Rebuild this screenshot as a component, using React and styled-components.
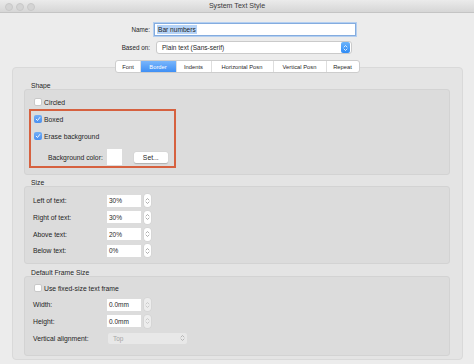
import React from "react";
import styled, { createGlobalStyle } from "styled-components";

const GlobalStyle = createGlobalStyle`
  html, body {
    margin: 0;
    padding: 0;
    background: #ececec;
  }
  body {
    font-family: "Liberation Sans", Arial, sans-serif;
    color: #1f1f1f;
  }
`;

const Window = styled.div`
  width: 474px;
  height: 364px;
  overflow: hidden;
  background: #ececec;
  display: flex;
  flex-direction: column;
`;

const TitleBar = styled.div`
  height: 12px;
  flex: none;
  display: flex;
  align-items: center;
  justify-content: center;
  background: linear-gradient(#ebebeb, #d6d6d6);
  border-bottom: 1px solid #c4c4c4;
  font-size: 7.1px;
  color: #3a3a3a;
  position: relative;
`;

const Lights = styled.div`
  position: absolute;
  left: 5px;
  top: 3px;
  display: flex;
  gap: 3px;

  span {
    width: 6px;
    height: 6px;
    border-radius: 50%;
    background: #d4d4d4;
    border: 0.5px solid #c8c8c8;
  }
`;

const TopForm = styled.div`
  display: grid;
  grid-template-columns: 150px auto;
  column-gap: 4px;
  row-gap: 5px;
  align-items: center;
  padding-top: 10px;
`;

const TopLabel = styled.div`
  text-align: right;
  font-size: 6.3px;
`;

const NameInput = styled.div`
  width: 198px;
  height: 11px;
  background: #fff;
  border: 1px solid #84acdf;
  box-shadow: 0 0 0 1px #b4cff0;
  display: flex;
  align-items: center;
  padding-left: 2px;
  font-size: 6.6px;

  span {
    background: #b5d3f7;
    padding: 0 1px;
    line-height: 9px;
  }
`;

const Popup = styled.div`
  width: ${(p) => p.$w}px;
  height: 13px;
  margin-left: 2px;
  background: ${(p) => (p.$disabled ? "#e8e8e8" : "#fff")};
  border: 1px solid ${(p) => (p.$disabled ? "#dcdcdc" : "#cacaca")};
  border-radius: 3px;
  box-sizing: border-box;
  display: flex;
  align-items: center;
  justify-content: space-between;
  padding-left: 5px;
  padding-right: ${(p) => (p.$disabled ? 2 : 0)}px;
  font-size: 6.5px;
  color: ${(p) => (p.$disabled ? "#a6a6a6" : "#1f1f1f")};
`;

const PopupArrow = styled.div`
  width: 9px;
  height: 11px;
  margin-right: 1px;
  border-radius: 2px;
  background: linear-gradient(#6cb4fb, #2f8bf5);
  display: flex;
  align-items: center;
  justify-content: center;
`;

const Tabs = styled.div`
  display: flex;
  align-self: center;
  margin-top: 6px;
  margin-bottom: -6px;
  height: 11px;
  background: #fff;
  border: 1px solid #cdcdcd;
  border-radius: 3px;
  position: relative;
  z-index: 1;
  overflow: hidden;
`;

const Tab = styled.div`
  width: ${(p) => p.$w}px;
  display: flex;
  align-items: center;
  justify-content: center;
  font-size: 5.8px;
  color: ${(p) => (p.$active ? "#fff" : "#1f1f1f")};
  background: ${(p) =>
    p.$active ? "linear-gradient(#79b6fb, #3f8ff5)" : "transparent"};
  border-left: 1px solid ${(p) => (p.$first ? "transparent" : "#dedede")};
  box-sizing: border-box;
`;

const Panel = styled.div`
  margin: 0 11px 0 12px;
  height: 293px;
  box-sizing: border-box;
  background: #e4e4e4;
  border: 1px solid #d9d9d9;
  border-radius: 4px;
  padding: 15px 12px 4px 11px;
  display: flex;
  flex-direction: column;
`;

const Section = styled.div`
  display: flex;
  flex-direction: column;
  margin-top: ${(p) => p.$mt || 0}px;
`;

const SectionTitle = styled.div`
  font-size: 6.8px;
  line-height: 6px;
  height: 6px;
  padding-left: 7px;
`;

const GroupBox = styled.div`
  height: ${(p) => p.$h}px;
  box-sizing: border-box;
  background: #dcdcdc;
  border: 1px solid #d3d3d3;
  border-radius: 3px;
  padding: ${(p) => p.$pad};
  display: flex;
  flex-direction: column;
`;

const CheckRow = styled.label`
  display: flex;
  align-items: center;
  gap: 2px;
  height: 8px;
  font-size: 6.8px;
  margin-top: ${(p) => p.$mt || 0}px;
  margin-left: ${(p) => p.$ml || 0}px;
`;

const Box = styled.span`
  width: 8px;
  height: 8px;
  box-sizing: border-box;
  border-radius: 2px;
  background: ${(p) => (p.$checked ? "linear-gradient(#72aef5, #4a8ff0)" : "#fff")};
  border: ${(p) => (p.$checked ? "none" : "0.5px solid #c9c9c9")};
  display: flex;
  align-items: center;
  justify-content: center;
`;

const Highlight = styled.div`
  width: 147px;
  height: 59px;
  box-sizing: border-box;
  margin: 3px 0 0 -5px;
  border: 2px solid #d6613f;
  padding: 4px 0 0 3px;
  display: flex;
  flex-direction: column;
`;

const ColorRow = styled.div`
  display: flex;
  align-items: center;
  margin-top: 9px;
  padding-left: 14px;
  font-size: 6.8px;
`;

const Swatch = styled.div`
  width: 15px;
  height: 16px;
  margin-left: 4px;
  background: #fff;
`;

const Button = styled.div`
  width: 34px;
  height: 11px;
  margin-left: 12px;
  background: #fff;
  border-radius: 2px;
  box-shadow: 0 0.5px 1px rgba(0, 0, 0, 0.2);
  display: flex;
  align-items: center;
  justify-content: center;
  font-size: 6.8px;
`;

const FieldGrid = styled.div`
  display: grid;
  grid-template-columns: 71px 34px 7px;
  column-gap: 3px;
  row-gap: 3.8px;
  align-items: center;
  margin-top: ${(p) => p.$mt || 0}px;
`;

const FieldLabel = styled.div`
  font-size: 6.8px;
`;

const Field = styled.div`
  height: 12px;
  background: #fff;
  display: flex;
  align-items: center;
  padding-left: 2px;
  font-size: 6.5px;
`;

const Stepper = styled.div`
  width: 7px;
  height: 13px;
  border-radius: 3px;
  background: ${(p) => (p.$disabled ? "#ededed" : "#fff")};
  box-shadow: 0 0 0 0.5px #cfcfcf;
  display: flex;
  align-items: center;
  justify-content: center;
`;

const VAlignPopup = styled(Popup)`
  margin-left: 0;
  grid-column: 2 / 4;
`;

const Chevrons = ({ color = "#fff", w = 5, h = 8 }) => (
  <svg width={w} height={h} viewBox="0 0 5 8">
    <path
      d="M1 3 L2.5 1.5 L4 3 M1 5 L2.5 6.5 L4 5"
      fill="none"
      stroke={color}
      strokeWidth="0.8"
      strokeLinecap="round"
      strokeLinejoin="round"
    />
  </svg>
);

const Check = () => (
  <svg width="6" height="6" viewBox="0 0 6 6">
    <path
      d="M1.2 3.2 L2.5 4.5 L4.8 1.5"
      fill="none"
      stroke="#fff"
      strokeWidth="0.9"
      strokeLinecap="round"
      strokeLinejoin="round"
    />
  </svg>
);

const tabs = [
  ["Font", 24],
  ["Border", 36],
  ["Indents", 35],
  ["Horizontal Posn", 62],
  ["Vertical Posn", 53],
  ["Repeat", 33],
];

const sizeRows = [
  ["Left of text:", "30%"],
  ["Right of text:", "30%"],
  ["Above text:", "20%"],
  ["Below text:", "0%"],
];

export default function App() {
  return (
    <Window>
      <GlobalStyle />
      <TitleBar>
        <Lights>
          <span />
          <span />
          <span />
        </Lights>
        System Text Style
      </TitleBar>

      <TopForm>
        <TopLabel>Name:</TopLabel>
        <NameInput>
          <span>Bar numbers</span>
        </NameInput>
        <TopLabel>Based on:</TopLabel>
        <Popup $w={196}>
          Plain text (Sans-serif)
          <PopupArrow>
            <Chevrons />
          </PopupArrow>
        </Popup>
      </TopForm>

      <Tabs>
        {tabs.map(([name, w], i) => (
          <Tab key={name} $w={w} $first={i === 0} $active={name === "Border"}>
            {name}
          </Tab>
        ))}
      </Tabs>

      <Panel>
        <Section>
          <SectionTitle>Shape</SectionTitle>
          <GroupBox $h={86} $pad="8px 0 0 9px">
            <CheckRow>
              <Box />
              Circled
            </CheckRow>
            <Highlight>
              <CheckRow>
                <Box $checked>
                  <Check />
                </Box>
                Boxed
              </CheckRow>
              <CheckRow $mt={9}>
                <Box $checked>
                  <Check />
                </Box>
                Erase background
              </CheckRow>
              <ColorRow>
                Background color:
                <Swatch />
                <Button>Set...</Button>
              </ColorRow>
            </Highlight>
          </GroupBox>
        </Section>

        <Section $mt={5}>
          <SectionTitle>Size</SectionTitle>
          <GroupBox $h={78} $pad="7px 0 0 8px">
            <FieldGrid>
              {sizeRows.map(([label, value]) => (
                <React.Fragment key={label}>
                  <FieldLabel>{label}</FieldLabel>
                  <Field>{value}</Field>
                  <Stepper>
                    <Chevrons color="#9a9a9a" />
                  </Stepper>
                </React.Fragment>
              ))}
            </FieldGrid>
          </GroupBox>
        </Section>

        <Section $mt={6}>
          <SectionTitle>Default Frame Size</SectionTitle>
          <GroupBox $h={80} $pad="7px 0 0 8px">
            <CheckRow $ml={1}>
              <Box />
              Use fixed-size text frame
            </CheckRow>
            <FieldGrid $mt={6}>
              <FieldLabel>Width:</FieldLabel>
              <Field>0.0mm</Field>
              <Stepper $disabled>
                <Chevrons color="#c2c2c2" />
              </Stepper>
              <FieldLabel>Height:</FieldLabel>
              <Field>0.0mm</Field>
              <Stepper $disabled>
                <Chevrons color="#c2c2c2" />
              </Stepper>
              <FieldLabel>Vertical alignment:</FieldLabel>
              <VAlignPopup $w={81} $disabled>
                Top
                <Chevrons color="#a8a8a8" />
              </VAlignPopup>
            </FieldGrid>
          </GroupBox>
        </Section>
      </Panel>
    </Window>
  );
}
